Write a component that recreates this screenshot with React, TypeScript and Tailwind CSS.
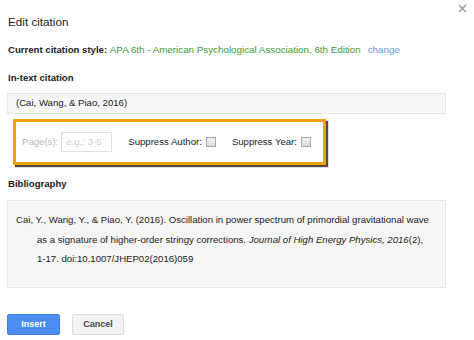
import React from "react";

export default function App() {
  return (
    <div className="relative w-[474px] h-[340px] bg-white px-[7px] overflow-hidden text-[#222]" style={{ fontFamily: '"Liberation Sans", Arial, sans-serif' }}>
      <svg className="absolute left-[458px] top-[4px]" width="9" height="9" viewBox="0 0 9 9">
        <path d="M1 1 L8 8 M8 1 L1 8" stroke="#9a9a9a" strokeWidth="1.4" />
      </svg>

      <div className="pt-[15px] pl-[1px] text-[11.7px] leading-[14px] text-[#222]">Edit citation</div>

      <div className="mt-[15px] pl-[1px] text-[9.6px] leading-[12px] whitespace-nowrap">
        <span className="font-bold">Current citation style:</span>{" "}
        <span className="text-[#3c9a34] text-[9.8px]">APA 6th - American Psychological Association, 6th Edition</span>
        <span className="ml-[7px] text-[#6397e6] text-[9.8px]">change</span>
      </div>

      <div className="mt-[16px] pl-[1px] text-[9.6px] leading-[12px] font-bold">In-text citation</div>

      <div className="mt-[9px] w-[439px] h-[21px] border border-[#e6e6e6] bg-[#f6f6f6] flex items-center pl-[8px] text-[9.6px]">
        (Cai, Wang, &amp; Piao, 2016)
      </div>

      <div className="mt-[5px] ml-[6px] w-[313px] h-[46px] border-[3px] border-[#f2a20f] shadow-[2px_2px_1px_rgba(40,30,20,0.8)] bg-white flex items-center pl-[6px] text-[9.6px]">
        <span className="text-[#b8b8b8]">Page(s):</span>
        <div className="ml-[3px] w-[51px] h-[20px] border border-[#e0e0e0] flex items-center pl-[4px] text-[#cfcfcf]">e.g.: 3-5</div>
        <span className="ml-[16px] text-[#222]">Suppress Author:</span>
        <div className="ml-[4px] w-[10px] h-[10px] border border-[#a8a8a8] bg-gradient-to-b from-[#f2f2f2] to-[#dcdcdc]" />
        <span className="ml-[16px] text-[#222]">Suppress Year:</span>
        <div className="ml-[4px] w-[10px] h-[10px] border border-[#a8a8a8] bg-gradient-to-b from-[#f2f2f2] to-[#dcdcdc]" />
      </div>

      <div className="mt-[13px] pl-[1px] text-[9.6px] leading-[12px] font-bold">Bibliography</div>

      <div className="mt-[10px] w-[439px] h-[88px] border border-[#e6e6e6] bg-[#f6f6f6] pt-[9px] text-[9.6px] leading-[19.5px] whitespace-nowrap">
        <div className="pl-[8px]">Cai, Y., Wang, Y., &amp; Piao, Y. (2016). Oscillation in power spectrum of primordial gravitational wave</div>
        <div className="pl-[29px]">
          as a signature of higher-order stringy corrections. <i>Journal of High Energy Physics, 2016</i>(2),
        </div>
        <div className="pl-[29px]">1-17. doi:10.1007/JHEP02(2016)059</div>
      </div>

      <div className="mt-[26px] flex gap-[12px]">
        <div className="w-[53px] h-[21px] bg-[#4d8ef2] border border-[#3f7fe6] rounded-[2px] flex items-center justify-center text-white font-bold text-[9px]">Insert</div>
        <div className="w-[52px] h-[21px] bg-[#f3f3f3] border border-[#dcdcdc] rounded-[2px] flex items-center justify-center text-[#444] font-bold text-[9px]">Cancel</div>
      </div>
    </div>
  );
}
